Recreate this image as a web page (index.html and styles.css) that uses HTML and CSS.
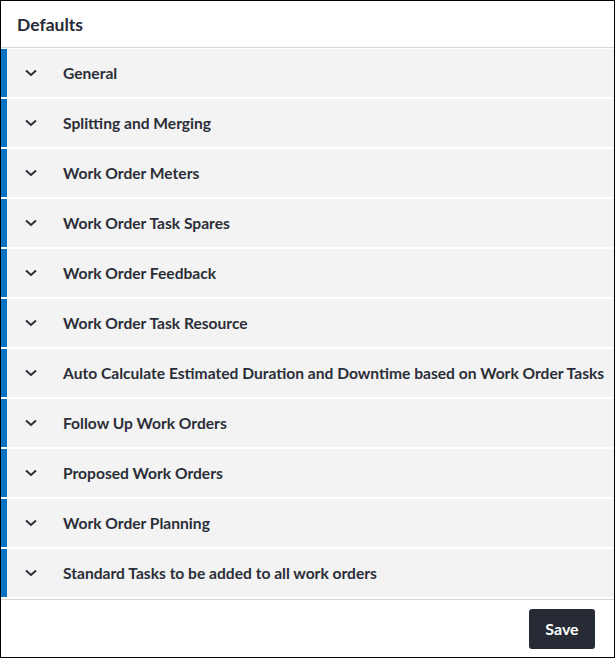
FILE: index.html
```html
<!DOCTYPE html>
<html>
<head>
<meta charset="utf-8">
<link rel="stylesheet" href="styles.css">
</head>
<body>
<div class="panel">
  <div class="panel-header">Defaults</div>
  <div class="sections">
    <div class="section"><span class="chev"><svg width="12" height="8" viewBox="0 0 12 8"><path d="M1 1.5 L6 6 L11 1.5" fill="none" stroke="currentColor" stroke-width="2"/></svg></span><span class="title">General</span></div>
    <div class="section"><span class="chev"><svg width="12" height="8" viewBox="0 0 12 8"><path d="M1 1.5 L6 6 L11 1.5" fill="none" stroke="currentColor" stroke-width="2"/></svg></span><span class="title">Splitting and Merging</span></div>
    <div class="section"><span class="chev"><svg width="12" height="8" viewBox="0 0 12 8"><path d="M1 1.5 L6 6 L11 1.5" fill="none" stroke="currentColor" stroke-width="2"/></svg></span><span class="title">Work Order Meters</span></div>
    <div class="section"><span class="chev"><svg width="12" height="8" viewBox="0 0 12 8"><path d="M1 1.5 L6 6 L11 1.5" fill="none" stroke="currentColor" stroke-width="2"/></svg></span><span class="title">Work Order Task Spares</span></div>
    <div class="section"><span class="chev"><svg width="12" height="8" viewBox="0 0 12 8"><path d="M1 1.5 L6 6 L11 1.5" fill="none" stroke="currentColor" stroke-width="2"/></svg></span><span class="title">Work Order Feedback</span></div>
    <div class="section"><span class="chev"><svg width="12" height="8" viewBox="0 0 12 8"><path d="M1 1.5 L6 6 L11 1.5" fill="none" stroke="currentColor" stroke-width="2"/></svg></span><span class="title">Work Order Task Resource</span></div>
    <div class="section"><span class="chev"><svg width="12" height="8" viewBox="0 0 12 8"><path d="M1 1.5 L6 6 L11 1.5" fill="none" stroke="currentColor" stroke-width="2"/></svg></span><span class="title">Auto Calculate Estimated Duration and Downtime based on Work Order Tasks</span></div>
    <div class="section"><span class="chev"><svg width="12" height="8" viewBox="0 0 12 8"><path d="M1 1.5 L6 6 L11 1.5" fill="none" stroke="currentColor" stroke-width="2"/></svg></span><span class="title">Follow Up Work Orders</span></div>
    <div class="section"><span class="chev"><svg width="12" height="8" viewBox="0 0 12 8"><path d="M1 1.5 L6 6 L11 1.5" fill="none" stroke="currentColor" stroke-width="2"/></svg></span><span class="title">Proposed Work Orders</span></div>
    <div class="section"><span class="chev"><svg width="12" height="8" viewBox="0 0 12 8"><path d="M1 1.5 L6 6 L11 1.5" fill="none" stroke="currentColor" stroke-width="2"/></svg></span><span class="title">Work Order Planning</span></div>
    <div class="section"><span class="chev"><svg width="12" height="8" viewBox="0 0 12 8"><path d="M1 1.5 L6 6 L11 1.5" fill="none" stroke="currentColor" stroke-width="2"/></svg></span><span class="title">Standard Tasks to be added to all work orders</span></div>
  </div>
  <div class="panel-footer"><button class="save">Save</button></div>
</div>
</body>
</html>
```

FILE: styles.css
```css
* { box-sizing: border-box; }
html, body { margin: 0; padding: 0; background: #fff; }
body { font-family: "Lato", "Liberation Sans", sans-serif; color: #2b2e38; }
.panel {
  width: 615px;
  height: 658px;
  border: 1px solid #000;
  display: flex;
  flex-direction: column;
  background: #fff;
  overflow: hidden;
}
.panel-header {
  height: 47px;
  border-bottom: 1px solid #d6d6d6;
  padding: 0 16px;
  display: flex;
  align-items: center;
  font-weight: 700;
  font-size: 17.5px;
  color: #262a36;
}
.sections {
  display: flex;
  flex-direction: column;
  gap: 2px;
  padding-top: 1px;
}
.section {
  height: 48px;
  background: #f3f3f3;
  border-left: 6px solid #0a72c2;
  display: flex;
  align-items: center;
  white-space: nowrap;
}
.chev {
  width: 56px;
  padding-left: 18px;
  display: flex;
  align-items: center;
  color: #2b2e38;
}
.chev svg { display: block; }
.title {
  font-weight: 700;
  font-size: 15.6px;
  color: #2b2e38;
}
.panel-footer {
  margin-top: 2px;
  border-top: 1px solid #d6d6d6;
  flex: 1;
  display: flex;
  justify-content: flex-end;
  align-items: center;
  padding-right: 18px;
}
.save {
  width: 66px;
  height: 40px;
  margin-right: 1px;
  border: none;
  border-radius: 3px;
  background: #262b36;
  color: #fff;
  font-family: inherit;
  font-weight: 700;
  font-size: 16px;
}
```
